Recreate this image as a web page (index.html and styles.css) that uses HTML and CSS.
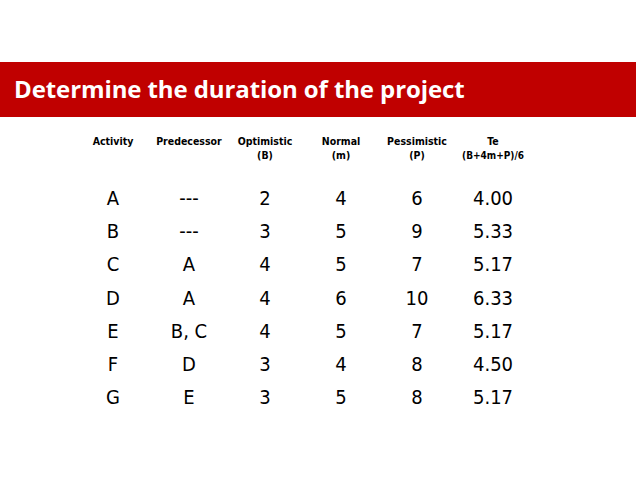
FILE: index.html
```html
<!DOCTYPE html>
<html>
<head>
<meta charset="utf-8">
<link rel="stylesheet" href="styles.css">
</head>
<body>
<div class="slide">
  <div class="band"><h1 class="title">Determine the duration of the project</h1></div>
  <div class="table">
    <div class="head">Activity</div>
    <div class="head">Predecessor</div>
    <div class="head">Optimistic<br>(B)</div>
    <div class="head">Normal<br>(m)</div>
    <div class="head">Pessimistic<br>(P)</div>
    <div class="head">Te<br><span class="small">(B+4m+P)/6</span></div>

    <div class="cell">A</div><div class="cell">---</div><div class="cell">2</div><div class="cell">4</div><div class="cell">6</div><div class="cell">4.00</div>
    <div class="cell">B</div><div class="cell">---</div><div class="cell">3</div><div class="cell">5</div><div class="cell">9</div><div class="cell">5.33</div>
    <div class="cell">C</div><div class="cell">A</div><div class="cell">4</div><div class="cell">5</div><div class="cell">7</div><div class="cell">5.17</div>
    <div class="cell">D</div><div class="cell">A</div><div class="cell">4</div><div class="cell">6</div><div class="cell">10</div><div class="cell">6.33</div>
    <div class="cell">E</div><div class="cell">B, C</div><div class="cell">4</div><div class="cell">5</div><div class="cell">7</div><div class="cell">5.17</div>
    <div class="cell">F</div><div class="cell">D</div><div class="cell">3</div><div class="cell">4</div><div class="cell">8</div><div class="cell">4.50</div>
    <div class="cell">G</div><div class="cell">E</div><div class="cell">3</div><div class="cell">5</div><div class="cell">8</div><div class="cell">5.17</div>
  </div>
</div>
</body>
</html>
```
FILE: styles.css
```css
html, body {
  margin: 0;
  padding: 0;
  background: #ffffff;
}
.slide {
  width: 638px;
  height: 478px;
  padding-top: 62px;
  box-sizing: border-box;
}
.band {
  width: 636px;
  height: 55px;
  background: #c00000;
  display: flex;
  align-items: center;
  padding-left: 14px;
  padding-bottom: 2px;
  box-sizing: border-box;
}
.title {
  margin: 0;
  font-family: "Open Sans", sans-serif;
  font-weight: 700;
  font-size: 24px;
  color: #ffffff;
  letter-spacing: -0.1px;
}
.table {
  margin-left: 75px;
  margin-top: 17px;
  display: grid;
  grid-template-columns: repeat(6, 76px);
  grid-auto-rows: 33.2px;
  grid-template-rows: 48px;
  color: #000;
}
.head {
  font-family: "DejaVu Sans Condensed", "DejaVu Sans", sans-serif;
  font-weight: 700;
  font-size: 10.5px;
  line-height: 14px;
  text-align: center;
}
.small {
  font-size: 10px;
}
.cell {
  font-family: "DejaVu Sans Condensed", "DejaVu Sans", sans-serif;
  font-size: 20px;
  line-height: 33px;
  text-align: center;
}
```
